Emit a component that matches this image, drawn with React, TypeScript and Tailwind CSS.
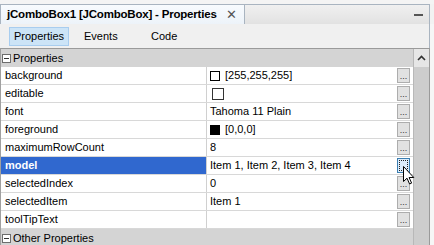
import React from "react"

const rows: { name: string; value: string; swatch?: "white" | "black" | "check"; selected?: boolean }[] = [
  { name: "background", value: "[255,255,255]", swatch: "white" },
  { name: "editable", value: "", swatch: "check" },
  { name: "font", value: "Tahoma 11 Plain" },
  { name: "foreground", value: "[0,0,0]", swatch: "black" },
  { name: "maximumRowCount", value: "8" },
  { name: "model", value: "Item 1, Item 2, Item 3, Item 4", selected: true },
  { name: "selectedIndex", value: "0" },
  { name: "selectedItem", value: "Item 1" },
  { name: "toolTipText", value: "" },
]

function Collapse() {
  return (
    <span className="w-[9px] h-[9px] border border-[#6d6d6d] bg-white flex items-center justify-center mr-[2px]">
      <span className="w-[5px] h-px bg-[#333]" />
    </span>
  )
}

function DotsButton({ active }: { active?: boolean }) {
  if (active) {
    return (
      <div className="w-[13px] h-[15px] border border-[#3c7fb1] bg-[#dcecfc] flex items-center justify-center">
        <div className="w-[9px] h-[11px] border border-dotted border-[#222]" />
      </div>
    )
  }
  return (
    <div className="w-[13px] h-[15px] border border-[#adadad] bg-[#e1e1e1] flex items-end justify-center text-[9px] leading-[9px] text-[#333] pb-[1px]">
      ...
    </div>
  )
}

function Cursor() {
  return (
    <svg className="absolute left-[403px] top-[166px]" width="12" height="19" viewBox="0 0 12 19">
      <path d="M0.5 0.5 L0.5 15.5 L4 12.2 L6.6 18 L8.6 17.1 L6.1 11.5 L10.8 11.5 Z" fill="#fff" stroke="#000" strokeWidth="1" />
    </svg>
  )
}

export default function App() {
  return (
    <div
      className="relative w-[434px] h-[245px] overflow-hidden bg-[#f2f2f2] text-[11px] text-black"
      style={{ fontFamily: '"Liberation Sans", Arial, sans-serif' }}
    >
      {/* title strip */}
      <div className="h-[4px] bg-[#f4f4f4]" />
      <div className="flex h-[20px] w-[430px]">
        <div className="w-[245px] shrink-0 border-t border-r border-l border-[#a9b4c0] bg-gradient-to-b from-[#f8fbfe] to-[#edf3f9] flex items-center pl-[6px] pr-[7px] whitespace-nowrap">
          <span className="font-bold text-[11.5px] tracking-[-0.2px]">jComboBox1 [JComboBox] - Properties</span>
          <span className="ml-auto text-[#555] text-[13px] leading-none">✕</span>
        </div>
        <div className="flex-1 border-t border-r border-[#a9b4c0] bg-gradient-to-b from-[#f0f0f0] to-[#e2e2e2] flex items-center justify-end pr-[6px]">
          <span className="w-[9px] h-[2px] bg-[#555]" />
        </div>
      </div>

      {/* toolbar */}
      <div className="flex items-center h-[24px] w-[430px] border-r border-[#a9b4c0] bg-[#f0f0f0] pl-[9px]">
        <div className="w-[60px] h-[19px] bg-[#cce4f7] border border-[#a8cdef] flex items-center justify-center">Properties</div>
        <div className="w-[82px] pl-[15px]">Events</div>
        <div>Code</div>
      </div>

      {/* property sheet */}
      <div className="flex w-[430px] border-t border-[#9a9a9a] border-l border-r border-l-[#a0a0a0]">
        <div className="flex-1">
          <div className="h-[18px] bg-[#d4d4d4] flex items-center pl-[1px]">
            <Collapse />
            <span>Properties</span>
          </div>
          {rows.map((r) => (
            <div key={r.name} className="flex h-[18px] border-b border-[#d8d8d8] bg-white">
              <div
                className={
                  r.selected
                    ? "w-[206px] bg-[#3068cf] text-white font-bold pl-[4px] flex items-center border-r border-[#d0d0d0]"
                    : "w-[206px] pl-[4px] flex items-center border-r border-[#d0d0d0]"
                }
              >
                {r.name}
              </div>
              <div className="flex-1 flex items-center pl-[3px] pr-[3px]">
                {r.swatch === "white" && <span className="w-[10px] h-[10px] border border-black bg-white mr-[5px]" />}
                {r.swatch === "black" && <span className="w-[10px] h-[10px] border border-black bg-black mr-[5px]" />}
                {r.swatch === "check" && <span className="w-[12px] h-[12px] border border-[#333] bg-white ml-[2px]" />}
                <span className="flex-1">{r.value}</span>
                <DotsButton active={r.selected} />
              </div>
            </div>
          ))}
          <div className="h-[18px] bg-[#d4d4d4] flex items-center pl-[1px]">
            <Collapse />
            <span>Other Properties</span>
          </div>
        </div>
        {/* scrollbar */}
        <div className="w-[16px] border-l border-[#b8b8b8] bg-[#cdcdcd] flex flex-col">
          <div className="h-[18px] bg-[#e6e6e6] flex items-center justify-center">
            <svg width="9" height="6" viewBox="0 0 9 6">
              <path d="M1 5 L4.5 1.5 L8 5" fill="none" stroke="#333" strokeWidth="1.6" />
            </svg>
          </div>
        </div>
      </div>
      <div className="absolute right-0 top-[24px] w-[4px] h-[221px] bg-[#f6f6f6]" />
      <Cursor />
    </div>
  )
}
